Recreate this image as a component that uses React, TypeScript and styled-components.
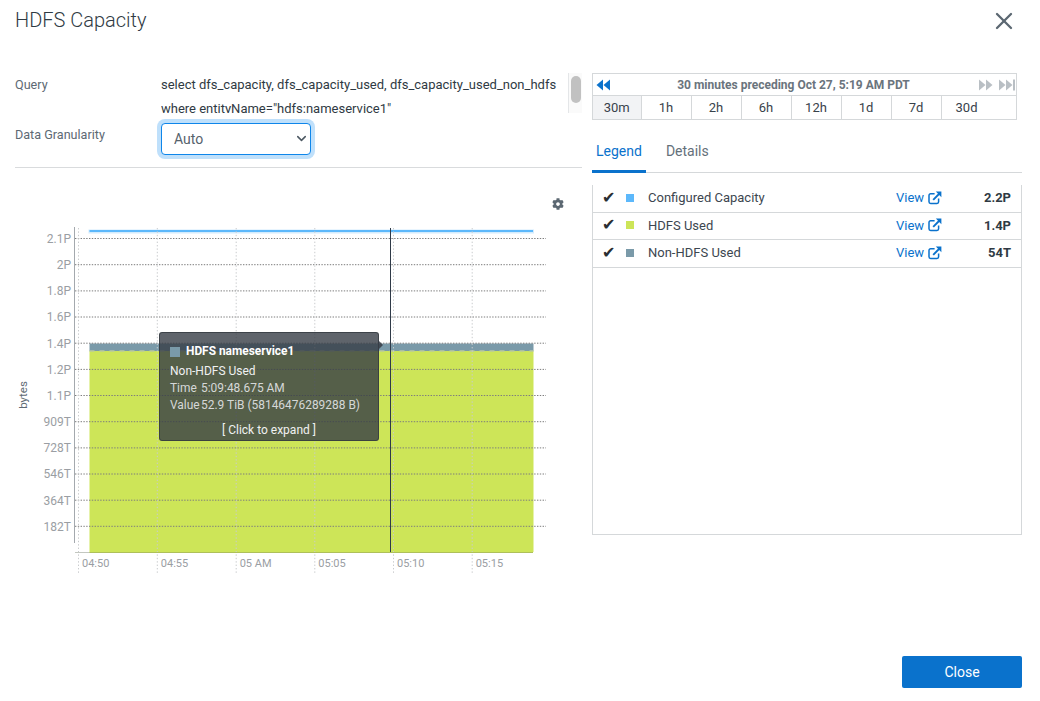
import React from "react";
import styled, { createGlobalStyle } from "styled-components";
import { ChevronDown, X } from "lucide-react";
import { FaCog } from "react-icons/fa";

const Global = createGlobalStyle`
  html, body { margin: 0; padding: 0; background: #fff; }
  body { font-family: Roboto, "Liberation Sans", sans-serif; font-size: 14px; color: #303a42; }
`;

const Modal = styled.div`
  width: 1040px; height: 701px; box-sizing: border-box; padding: 0 18px 13px 15px;
  display: flex; flex-direction: column; overflow: hidden;
`;
const Header = styled.header`
  height: 73px; flex: none; display: flex; justify-content: space-between; align-items: flex-start;
`;
const Title = styled.h1`
  margin: 6px 0 0; font-size: 20px; line-height: 28px; font-weight: 300; color: #2f3a43;
`;
const CloseIcon = styled.button`
  border: 0; background: none; padding: 0; margin: 7px 4px 0 0; width: 28px; height: 28px; color: #5c6872; display: flex;
`;
const Body = styled.main`
  flex: 1; display: flex; gap: 10px; min-height: 0;
`;
const Left = styled.section`
  width: 567px; flex: none; display: flex; flex-direction: column;
`;
const Right = styled.section`
  width: 430px; flex: none; display: flex; flex-direction: column;
`;
const QueryRow = styled.div`
  display: flex; height: 40px; font-size: 13px;
`;
const FieldLabel = styled.label`
  width: 146px; flex: none; font-size: 12.6px; line-height: 24px; color: #5d6973;
`;
const QueryText = styled.div`
  flex: 1; overflow: hidden; font-size: 13px; line-height: 24px; color: #2f3a43; white-space: nowrap;
`;
const ScrollTrack = styled.div`
  width: 14px; flex: none; box-sizing: border-box; border-left: 1px solid #e4e6e8; background: #fafafa; padding: 3px 1px 0 2px;
`;
const ScrollThumb = styled.div`
  height: 27px; border-radius: 5px; background: #c1c1c1;
`;
const GranularityRow = styled.div`
  display: flex; margin-top: 10px; height: 32px; padding-bottom: 12px; border-bottom: 1px solid #d9dbdd; align-items: flex-start;
`;
const GranularityLabel = styled(FieldLabel)`
  line-height: 24px;
`;
const SelectBox = styled.div`
  position: relative; width: 150px; height: 32px;
`;
const Select = styled.select`
  appearance: none; width: 100%; height: 100%; box-sizing: border-box; padding: 0 12px 1px; margin: 0;
  border: 1px solid #0f86ea; border-radius: 4px; box-shadow: 0 0 0 4px #bfe0fb; outline: none; background: #fff;
  font: 14px Roboto, sans-serif; color: #56626c;
`;
const SelectArrow = styled.span`
  position: absolute; right: 2px; top: 8px; color: #4c5862; display: flex; pointer-events: none;
`;
const ChartWrap = styled.div`
  position: relative; width: 567px; height: 410px; margin-top: 22px;
`;
const ChartSvg = styled.svg`
  display: block; width: 567px; height: 410px;
`;
const GearButton = styled.span`
  position: absolute; right: 18px; top: 8px; color: #5c6872; display: flex;
`;
const Tooltip = styled.div`
  position: absolute; left: 144px; top: 142px; width: 220px; height: 109px; box-sizing: border-box;
  background: rgba(55, 61, 70, .8); border: 1px solid rgba(50, 56, 62, .75); border-radius: 3px;
  padding: 11px 10px 0; color: #e8eaea; font-size: 12px; line-height: 17px;
  &::after {
    content: ""; position: absolute; right: -5px; top: 7px; border-left: 5px solid rgba(55, 61, 70, .85);
    border-top: 5px solid transparent; border-bottom: 5px solid transparent;
  }
`;
const TipTitle = styled.div`
  display: flex; align-items: center; gap: 6px; font-weight: 700; color: #fff; margin-bottom: 3px; margin-top: -1px; font-size: 11.9px;
`;
const TipSwatch = styled.i`
  width: 10px; height: 10px; background: #7a9aa9; display: block;
`;
const TipSeries = styled.div`
  color: #f0f1f1;
`;
const TipLine = styled.div`
  display: flex; color: #d5d8d8; font-size: 11.95px; height: 17px;
`;
const TipKey = styled.span`
  width: 31px; flex: none;
`;
const TipExpand = styled.div`
  text-align: center; margin-top: 8px; color: #f0f1f1;
`;
const TimeBox = styled.div`
  width: 425px; box-sizing: border-box; border: 1px solid #d5d8da; height: 47px; display: flex; flex-direction: column;
`;
const TimeHead = styled.div`
  height: 21px; display: flex; align-items: center; justify-content: space-between; padding: 0 1px 0 3px;
  border-bottom: 1px solid #d5d8da;
`;
const TimeText = styled.span`
  font-size: 12px; font-weight: 700; color: #6a747d; margin-right: 2px;
`;
const NavGroup = styled.span`
  display: flex; gap: 6px; align-items: center;
`;
const RangeRow = styled.div`
  flex: 1; display: flex;
`;
const RangeCell = styled.button<{ $active?: boolean; $first?: boolean; $last?: boolean }>`
  width: ${(p) => (p.$first ? "48.5px" : "50px")}; flex: none; box-sizing: border-box; border: 0; padding: 0; margin: 0;
  border-right: ${(p) => (p.$last ? "0" : "1px solid #d5d8da")};
  background: ${(p) => (p.$active ? "#f2f3f5" : "#fff")};
  font: 13px Roboto, sans-serif; color: #38424b;
`;
const Tabs = styled.nav`
  display: flex; height: 53px; box-sizing: border-box; align-items: flex-end; border-bottom: 1px solid #d5d8da;
`;
const Tab = styled.div<{ $active?: boolean }>`
  height: 37px; box-sizing: border-box; padding: 0 ${(p) => (p.$active ? "4px" : "0")}; margin-right: 20px; margin-bottom: -1px;
  font-size: 14px; line-height: 30px;
  color: ${(p) => (p.$active ? "#0a72cc" : "#64707a")};
  border-bottom: ${(p) => (p.$active ? "3px solid #0a72cc" : "0")};
`;
const Legend = styled.div`
  margin-top: 12px; height: 350px; box-sizing: border-box; border: 1px solid #d5d8da; border-top: 0;
`;
const LegendRow = styled.div`
  display: flex; align-items: center; height: 27.5px; box-sizing: border-box; border-bottom: 1px solid #d5d8da;
  padding: 0 10px 1px 10px; font-size: 13px;
`;
const Check = styled.span`
  width: 23px; flex: none; font: 16px/16px "DejaVu Sans", sans-serif; color: #2a2f33; margin-left: -1px; margin-right: 1px;
`;
const Swatch = styled.i<{ $color: string }>`
  width: 8px; height: 8px; flex: none; background: ${(p) => p.$color}; margin-right: 14px;
`;
const SeriesName = styled.span`
  flex: 1; color: #3c464f;
`;
const ViewLink = styled.a`
  display: flex; align-items: center; gap: 4px; color: #0a72cc; width: 82px; flex: none;
`;
const Value = styled.b`
  width: 33px; text-align: right; flex: none; font-weight: 700; color: #2f3a43;
`;
const Footer = styled.footer`
  flex: none; display: flex; justify-content: flex-end;
`;
const CloseButton = styled.button`
  width: 120px; height: 32px; border: 0; border-radius: 2px; background: #0a72cc; color: #fff; font: 14px Roboto, sans-serif;
`;

const ExternalIcon = () => (
  <svg width="14" height="14" viewBox="0 0 14 14" fill="none" stroke="#0a72cc" strokeWidth="1.5">
    <path d="M10.6 7.6v3.2a1.6 1.6 0 0 1-1.6 1.6H2.6a1.6 1.6 0 0 1-1.6-1.6V4.4a1.6 1.6 0 0 1 1.6-1.6h4" />
    <path d="M5.2 8.8 11.5 2.5" strokeWidth="1.9" />
    <path d="M7.8 0.6h5.6v5.6z" fill="#0a72cc" stroke="none" />
  </svg>
);

const Skip = ({ color, flip, bar }: { color: string; flip?: boolean; bar?: boolean }) => (
  <svg width={bar ? 16 : 14} height="12" viewBox={bar ? "0 0 16 12" : "0 0 14 12"} fill={color} style={flip ? { transform: "scaleX(-1)" } : undefined}>
    <path d="M0 0.5 6.5 6 0 11.5z" />
    <path d="M7 0.5 13.5 6 7 11.5z" />
    {bar && <rect x="14" y="0.5" width="2" height="11" />}
  </svg>
);

const gridY = [238.5, 264.7, 290.9, 317, 343.2, 369.4, 395.5, 421.7, 447.9, 474, 500.2, 526.3];
const yLabels = ["2.1P", "2P", "1.8P", "1.6P", "1.4P", "1.2P", "1.1P", "909T", "728T", "546T", "364T", "182T"];
const gridX = [78.5, 157.3, 236.2, 314.8, 393.5, 472.2];
const xLabels = ["04:50", "04:55", "05 AM", "05:05", "05:10", "05:15"];

const Chart = () => (
  <ChartSvg viewBox="15 190 567 410">
    <rect x="89.5" y="351" width="444" height="201" fill="#cde558" />
    <rect x="89.5" y="343.5" width="444" height="7.5" fill="#7a9aa9" />
    <line x1="89.5" x2="533.5" y1="351" y2="351" stroke="#b9c9a0" strokeWidth="1.4" strokeDasharray="5 5" />
    <rect x="88.5" y="229.5" width="445.5" height="4" fill="#d4ecfd" />
    <rect x="89.5" y="230" width="443.5" height="2" fill="#5cb8fb" />
    {gridY.map((y) => (
      <line key={y} x1="75" x2="546" y1={y} y2={y} stroke="#7d7d7d" strokeDasharray="1.4 1.4" />
    ))}
    {gridX.map((x) => (
      <line key={x} x1={x} x2={x} y1="228" y2="573" stroke="#c9cbcd" strokeDasharray="1.4 2" />
    ))}
    <line x1="74.5" x2="74.5" y1="227" y2="543" stroke="#a4a9ae" strokeWidth="1" />
    <line x1="75" x2="533" y1="552.5" y2="552.5" stroke="#c3c7c0" />
    <line x1="89.5" x2="533" y1="552.5" y2="552.5" stroke="#aec05a" />
    <line x1="390.5" x2="390.5" y1="228" y2="552" stroke="#2f3a48" />
    <g fontFamily="Roboto, sans-serif" fontSize="12" fill="#9a9ea3" textAnchor="end">
      {yLabels.map((l, i) => (
        <text key={l} x="71" y={gridY[i] + 4.4}>{l}</text>
      ))}
    </g>
    <g fontFamily="Roboto, sans-serif" fontSize="11" fill="#9a9ea3">
      {xLabels.map((l, i) => (
        <text key={l} x={gridX[i] + 3.5} y="567">{l}</text>
      ))}
    </g>
    <text transform="translate(27 395) rotate(-90)" fontFamily="Roboto, sans-serif" fontSize="11.5" fill="#5d6973" textAnchor="middle">bytes</text>
  </ChartSvg>
);

const rows = [
  { name: "Configured Capacity", color: "#5cb8fb", value: "2.2P" },
  { name: "HDFS Used", color: "#cde558", value: "1.4P" },
  { name: "Non-HDFS Used", color: "#7a9aa9", value: "54T" },
];
const ranges = ["30m", "1h", "2h", "6h", "12h", "1d", "7d", "30d"];

export default function App() {
  return (
    <Modal>
      <Global />
      <Header>
        <Title>HDFS Capacity</Title>
        <CloseIcon aria-label="Close"><X size={28} strokeWidth={2} /></CloseIcon>
      </Header>
      <Body>
        <Left>
          <QueryRow>
            <FieldLabel>Query</FieldLabel>
            <QueryText>
              select dfs_capacity, dfs_capacity_used, dfs_capacity_used_non_hdfs
              <br />
              where entityName="hdfs:nameservice1"
            </QueryText>
            <ScrollTrack><ScrollThumb /></ScrollTrack>
          </QueryRow>
          <GranularityRow>
            <GranularityLabel>Data Granularity</GranularityLabel>
            <SelectBox>
              <Select defaultValue="Auto"><option>Auto</option></Select>
              <SelectArrow><ChevronDown size={15} strokeWidth={2.4} /></SelectArrow>
            </SelectBox>
          </GranularityRow>
          <ChartWrap>
            <Chart />
            <GearButton><FaCog size={12} /></GearButton>
            <Tooltip>
              <TipTitle><TipSwatch />HDFS nameservice1</TipTitle>
              <TipSeries>Non-HDFS Used</TipSeries>
              <TipLine><TipKey>Time</TipKey>5:09:48.675 AM</TipLine>
              <TipLine><TipKey>Value</TipKey>52.9 TiB (58146476289288 B)</TipLine>
              <TipExpand>[ Click to expand ]</TipExpand>
            </Tooltip>
          </ChartWrap>
        </Left>
        <Right>
          <TimeBox>
            <TimeHead>
              <Skip color="#0a72cc" flip />
              <TimeText>30 minutes preceding Oct 27, 5:19 AM PDT</TimeText>
              <NavGroup>
                <Skip color="#b9bfc4" />
                <Skip color="#b9bfc4" bar />
              </NavGroup>
            </TimeHead>
            <RangeRow>
              {ranges.map((r, i) => (
                <RangeCell key={r} $active={i === 0} $first={i === 0} $last={i === ranges.length - 1}>{r}</RangeCell>
              ))}
            </RangeRow>
          </TimeBox>
          <Tabs>
            <Tab $active>Legend</Tab>
            <Tab>Details</Tab>
          </Tabs>
          <Legend>
            {rows.map((r) => (
              <LegendRow key={r.name}>
                <Check>✔</Check>
                <Swatch $color={r.color} />
                <SeriesName>{r.name}</SeriesName>
                <ViewLink>View <ExternalIcon /></ViewLink>
                <Value>{r.value}</Value>
              </LegendRow>
            ))}
          </Legend>
        </Right>
      </Body>
      <Footer>
        <CloseButton>Close</CloseButton>
      </Footer>
    </Modal>
  );
}
